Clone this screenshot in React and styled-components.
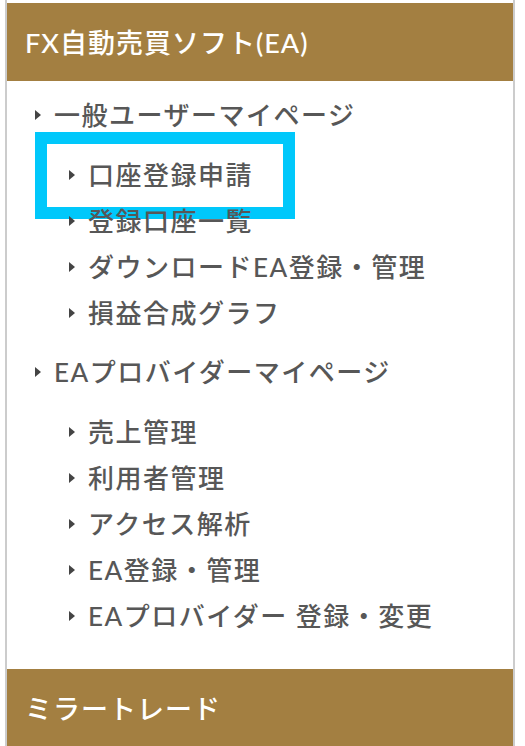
import React from 'react'
import styled, { createGlobalStyle } from 'styled-components'

let GlobalStyle = createGlobalStyle`
  html, body {
    margin: 0;
    padding: 0;
    background: #fff;
  }
  body {
    font-family: "Lato", "Noto Sans CJK JP", sans-serif;
  }
`

let menu = [
  {
    label: '一般ユーザーマイページ',
    children: [
      { label: '口座登録申請', marked: true },
      { label: '登録口座一覧' },
      { label: 'ダウンロードEA登録・管理' },
      { label: '損益合成グラフ' }
    ]
  },
  {
    label: 'EAプロバイダーマイページ',
    children: [
      { label: '売上管理' },
      { label: '利用者管理' },
      { label: 'アクセス解析' },
      { label: 'EA登録・管理' },
      { label: 'EAプロバイダー 登録・変更' }
    ]
  }
]

let App = () => (
  <>
    <GlobalStyle />
    <Panel>
      <SectionTitle>FX自動売買ソフト(EA)</SectionTitle>
      <Menu>
        {menu.map(group => (
          <Item key={group.label}>
            <Row>{group.label}</Row>
            <SubMenu>
              {group.children.map(child => (
                <SubItem key={child.label} marked={child.marked}>
                  <Row>{child.label}</Row>
                </SubItem>
              ))}
            </SubMenu>
          </Item>
        ))}
      </Menu>
      <SectionTitle>ミラートレード</SectionTitle>
    </Panel>
  </>
)

let Panel = styled.div`
  margin-left: 5px;
  width: 510px;
  min-height: 746px;
  box-sizing: border-box;
  padding-top: 3px;
  border-left: 2px solid #cccccc;
  border-right: 2px solid #cccccc;
  background: #fff;
`

let SectionTitle = styled.h2`
  margin: 0;
  height: 78px;
  display: flex;
  align-items: center;
  padding-left: 18px;
  padding-bottom: 2px;
  box-sizing: border-box;
  background: #a37f41;
  color: #fff;
  font-size: 27px;
  font-weight: 500;
  letter-spacing: 1px;
`

let Menu = styled.ul`
  list-style: none;
  margin: 0;
  padding: 9px 0 19px 28px;
`

let Item = styled.li`
  margin-bottom: 13px;
`

let Row = styled.div`
  display: flex;
  align-items: center;
  height: 46px;
  color: #575757;
  font-size: 26px;
  font-weight: 500;
  letter-spacing: 1.5px;
  white-space: nowrap;

  &::before {
    content: '';
    flex: none;
    width: 0;
    height: 0;
    margin: 3px 13px 0 0;
    border-top: 5px solid transparent;
    border-bottom: 5px solid transparent;
    border-left: 6px solid #444;
  }
`

let SubMenu = styled.ul`
  list-style: none;
  margin: 14px 0 0;
  padding: 0 0 0 34px;
`

let SubItem = styled.li`
  position: relative;

  ${p => p.marked && `
    &::after {
      content: '';
      position: absolute;
      left: -34px;
      top: -18px;
      width: 260px;
      height: 87px;
      box-sizing: border-box;
      border: 12px solid #00c8fb;
    }
  `}
`

export default App
